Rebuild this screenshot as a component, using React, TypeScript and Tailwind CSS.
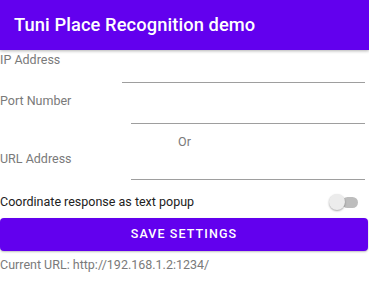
export default function App() {
  return (
    <div className="w-[369px] h-[286px] bg-white overflow-hidden font-['Roboto',_sans-serif]">
      <header className="h-[50px] bg-[#6200ee] px-[14px] flex items-center shadow-[0_1px_3px_rgba(0,0,0,0.3)]">
        <h1 className="text-white text-[18.3px] font-medium tracking-[0.1px]">Tuni Place Recognition demo</h1>
      </header>

      <div className="flex flex-col">
        <div className="h-[18px] mt-[1px] flex items-center text-[12.5px] text-[#7a7a7a]">IP Address</div>
        <div className="h-[14px] ml-[122px] mr-[4px] border-b border-[#9e9e9e]" />

        <div className="h-[18px] mt-[9px] flex items-center text-[12.5px] text-[#7a7a7a]">Port Number</div>
        <div className="h-[14px] ml-[131px] mr-[4px] border-b border-[#9e9e9e]" />

        <div className="h-[16px] mt-[10px] flex items-center justify-center text-[12.5px] text-[#7a7a7a]">Or</div>
        <div className="h-[18px] flex items-center text-[12.5px] text-[#7a7a7a]">URL Address</div>
        <div className="h-[12px] ml-[131px] mr-[4px] border-b border-[#9e9e9e]" />

        <div className="h-[24px] mt-[10px] flex items-center justify-between text-[12.5px] text-[#212121]">
          <span>Coordinate response as text popup</span>
          <span className="relative w-[30px] h-[20px] mr-[10px] flex items-center">
            <span className="absolute left-[13px] w-[16px] h-[11px] rounded-full bg-[#bdbdbd]" />
            <span className="absolute left-0 w-[16px] h-[16px] rounded-full bg-[#ececec] shadow-[0_1px_2px_rgba(0,0,0,0.35)]" />
          </span>
        </div>

        <button className="mt-[4px] h-[33px] w-[368px] rounded-[4px] bg-[#6200ee] text-white text-[12.5px] font-medium tracking-[1.1px] shadow-[0_1px_2px_rgba(0,0,0,0.25)]">
          SAVE SETTINGS
        </button>

        <div className="h-[18px] mt-[5px] flex items-center text-[12.5px] text-[#7a7a7a]">Current URL: http://192.168.1.2:1234/</div>
      </div>
    </div>
  );
}
